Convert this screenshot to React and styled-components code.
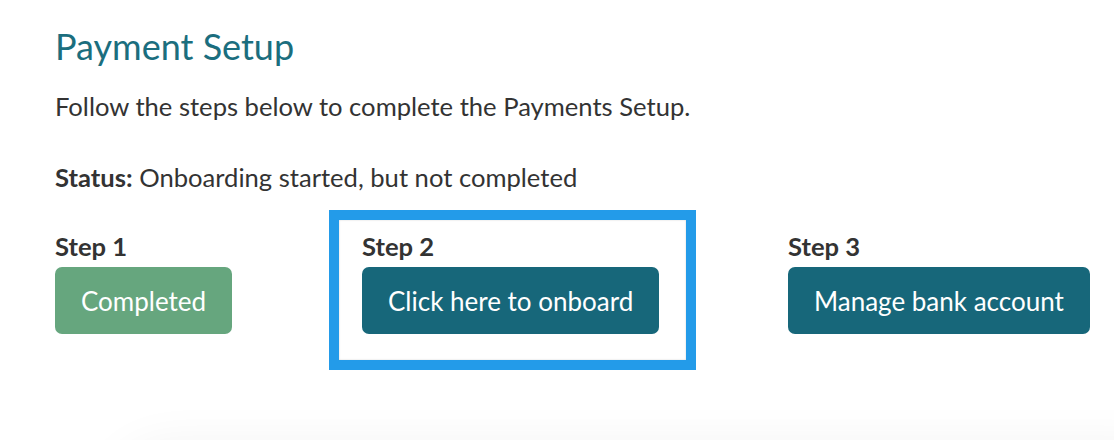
import React from 'react';
import styled, { createGlobalStyle } from 'styled-components';

const GlobalStyle = createGlobalStyle`
  html, body {
    margin: 0;
    padding: 0;
    background: #ffffff;
    overflow: hidden;
  }
  body {
    font-family: Lato, "Open Sans", "Liberation Sans", sans-serif;
    color: #333333;
  }
`;

const Page = styled.div`
  width: 1114px;
  height: 440px;
  overflow: hidden;
  position: relative;
`;

const Content = styled.div`
  padding: 24px 0 0 55px;
`;

const Title = styled.h1`
  margin: 0;
  font-size: 36px;
  font-weight: 400;
  line-height: 44px;
  color: #1b6e7e;
`;

const Intro = styled.p`
  margin: 23px 0 0;
  font-size: 25.6px;
  line-height: 30px;
`;

const Status = styled.p`
  margin: 41px 0 0;
  font-size: 25.6px;
  line-height: 30px;

  strong {
    font-weight: 700;
  }
`;

const StepsRow = styled.div`
  display: flex;
  align-items: flex-start;
  margin-top: 18px;
`;

const StepColumn = styled.div`
  width: ${(p) => p.$width}px;
  padding-top: 22px;
  flex-shrink: 0;
`;

const Highlight = styled.div`
  width: 367px;
  box-sizing: border-box;
  border: 10px solid #239be9;
  box-shadow: inset 0 0 2px rgba(0, 0, 0, 0.18);
  padding: 12px 0 26px 23px;
  margin-right: 92px;
  flex-shrink: 0;
`;

const StepLabel = styled.div`
  font-size: 25.6px;
  font-weight: 700;
  line-height: 28px;
  margin-bottom: 7px;
`;

const StepButton = styled.button`
  height: 67px;
  padding: 0 26px;
  border: none;
  border-radius: 7px;
  background: ${(p) => (p.$done ? '#66a67e' : '#17677a')};
  color: #ffffff;
  font-family: Lato, "Open Sans", "Liberation Sans", sans-serif;
  font-size: 26px;
  font-weight: 400;
  cursor: pointer;
  white-space: nowrap;
`;

const Shade = styled.div`
  height: 200px;
  border-radius: 60px 0 0 0;
  box-shadow: 0 -6px 50px rgba(0, 0, 0, 0.06);
  background: #f8f8f8;
  position: absolute;
  left: 110px;
  right: -40px;
  top: 452px;
`;

const App = () => {
  return (
    <Page>
      <GlobalStyle />
      <Content>
        <Title>Payment Setup</Title>
        <Intro>Follow the steps below to complete the Payments Setup.</Intro>
        <Status>
          <strong>Status:</strong> Onboarding started, but not completed
        </Status>
        <StepsRow>
          <StepColumn $width={274}>
            <StepLabel>Step 1</StepLabel>
            <StepButton $done>Completed</StepButton>
          </StepColumn>
          <Highlight>
            <StepLabel>Step 2</StepLabel>
            <StepButton>Click here to onboard</StepButton>
          </Highlight>
          <StepColumn $width={330}>
            <StepLabel>Step 3</StepLabel>
            <StepButton>Manage bank account</StepButton>
          </StepColumn>
        </StepsRow>
      </Content>
      <Shade />
    </Page>
  );
};

export default App;
